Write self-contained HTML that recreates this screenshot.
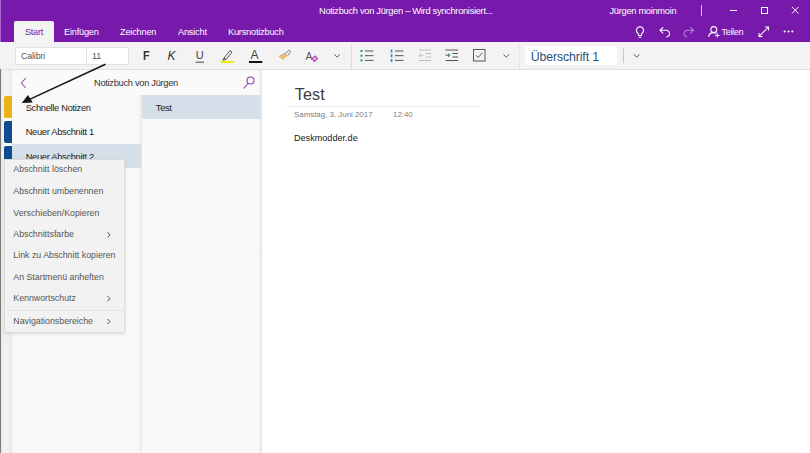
<!DOCTYPE html>
<html><head><meta charset="utf-8">
<style>
*{box-sizing:border-box;margin:0;padding:0}
html,body{width:810px;height:453px;overflow:hidden;background:#fff;font-family:"Liberation Sans","DejaVu Sans",sans-serif;}
#app{position:relative;width:810px;height:453px;overflow:hidden;background:#fff}
.abs{position:absolute}
#title{left:0;top:0;width:810px;height:42.4px;background:#7719aa}
.tt{position:absolute;color:#fff;font-size:9.3px;white-space:nowrap;line-height:12px;letter-spacing:-.3px}
#ribbon{left:0;top:42px;width:810px;height:28px;background:#f3f3f3;border-bottom:1px solid #e1e1e1}
.tab{position:absolute;top:26px;color:#fff;font-size:9.2px;line-height:12px;white-space:nowrap;letter-spacing:-.2px}
#tabstart{position:absolute;left:14px;top:21px;width:40px;height:22px;background:#f3f3f3;border-radius:2px 2px 0 0;color:#7719aa;font-size:9.2px;line-height:12px;text-align:center;padding-top:5px;letter-spacing:-.25px}
.box{position:absolute;background:#fff;border:1px solid #e3e3e3;font-size:8.9px;color:#555;line-height:17.5px;padding-left:5px;letter-spacing:-.15px}
.ri{position:absolute;top:42px;height:28px}
#navhead{left:12px;top:70px;width:250px;height:25px;background:#fafafa;}
#sections{left:12px;top:95px;width:131px;height:358px;background:#f8f8f8}
#pages{left:142px;top:95px;width:119px;height:358px;background:#f9f9f9}
.item{position:absolute;left:0;width:100%;height:24px;font-size:9.3px;color:#222;line-height:25.5px;padding-left:13.7px;white-space:nowrap;letter-spacing:-.3px}
.sel{background:#d4dfe9}
#menu{left:4px;top:158.5px;width:121px;height:174.5px;background:#f2f2f2;border:1px solid #dcdcdc;box-shadow:0 1px 3px rgba(0,0,0,.12)}
.mi{position:absolute;left:8.3px;font-size:8.8px;color:#555;line-height:12px;white-space:nowrap;letter-spacing:0}
.chev{position:absolute;left:100px;font-size:9px;color:#444}
</style></head><body>
<div id="app">
 <div id="title" class="abs"></div>
 <div class="tt" style="left:319px;top:4.7px">Notizbuch von Jürgen – Wird synchronisiert...</div>
 <div class="tt" style="left:609.5px;top:4.6px">Jürgen moinmoin</div>
 <div class="abs" style="left:701px;top:5px;width:1px;height:11px;background:#d9b8ea"></div>
 <svg class="abs" style="left:720px;top:0" width="90" height="21" viewBox="0 0 90 21">
  <path d="M10 10.5h7" stroke="#fff" stroke-width="1" fill="none"/>
  <rect x="41.5" y="7.5" width="6" height="6" stroke="#fff" stroke-width="1" fill="none"/>
  <path d="M72 7l6.5 6.5M78.500 7l-6.500 6.500" stroke="#fff" stroke-width="1" fill="none"/>
 </svg>
 <div id="tabstart">Start</div>
 <div class="tab" style="left:64px">Einfügen</div>
 <div class="tab" style="left:120px">Zeichnen</div>
 <div class="tab" style="left:178px">Ansicht</div>
 <div class="tab" style="left:228px">Kursnotizbuch</div>
 <!-- right title icons -->
 <svg class="abs" style="left:630px;top:21px" width="180" height="21" viewBox="0 0 180 21">
  <g stroke="#fff" fill="none" stroke-width="1.050">
   <path d="M10 5.700a3.600 3.600 0 0 1 1.800 6.700l-.3 2h-3l-.3 -2a3.600 3.600 0 0 1 1.800 -6.700z"/>
   <path d="M8.500 16.200h3"/>
   <path d="M33.200 6.200l-3.200 3.100 3.200 3.100M30.300 9.300h5.700a3.300 3.300 0 0 1 3.500 3.300c0 2 -1.400 3.300 -3.300 3.300"/>
   <path d="M60.300 6.200l3.200 3.100 -3.200 3.100M63.200 9.300h-5.700a3.300 3.300 0 0 0 -3.500 3.300c0 2 1.400 3.300 3.300 3.300" stroke="#b687d2"/>
   <circle cx="83.800" cy="8.600" r="3"/><path d="M78.700 16c0 -3 2.300 -4.400 5.100 -4.400 1.100 0 2 .2 2.700 .6M87.300 12.200v4.400M85.100 14.400h4.400"/>
   <path d="M129 15.500l9.500 -9.500M129 12v3.500h3.500M135 6h3.500v3.500"/>
  </g>
  <circle cx="154.700" cy="10.500" r="1.050" fill="#fff"/><circle cx="158.500" cy="10.500" r="1.050" fill="#fff"/><circle cx="162.300" cy="10.500" r="1.050" fill="#fff"/>
 </svg>
 <div class="tt" style="left:721.500px;top:25.500px;font-size:9px;letter-spacing:-.3px">Teilen</div>

 <div id="ribbon" class="abs"></div>
 <div class="box" style="left:15px;top:47px;width:72px;height:18px">Calibri</div>
 <div class="box" style="left:86px;top:47px;width:43px;height:18px">11</div>
 <svg class="abs" style="left:130px;top:42px" width="520" height="28" viewBox="0 0 520 28">
  <text x="13" y="18.300" font-family="Liberation Sans" font-weight="bold" font-size="12" textLength="6.600" lengthAdjust="spacingAndGlyphs" fill="#333">F</text>
  <text x="37.500" y="18.300" font-family="Liberation Sans" font-style="italic" font-size="12" fill="#333">K</text>
  <text x="65.700" y="17.300" font-family="Liberation Sans" font-size="11" fill="#444">U</text>
  <path d="M65.700 20.200h8.300" stroke="#444" stroke-width="1"/>
  <!-- highlighter -->
  <path d="M94 16l6 -7.500 2 1.500 -6 7.500z M94 16l-1.200 2.200 3.200 -.7" stroke="#444" stroke-width=".9" fill="none"/>
  <rect x="90.700" y="19" width="13.300" height="2" fill="#f5ec00"/>
  <!-- font colour -->
  <text x="120.600" y="17" font-family="Liberation Sans" font-size="12" fill="#444">A</text>
  <rect x="119" y="19" width="13.300" height="2" fill="#111"/>
  <!-- format painter -->
  <path d="M149 14.500l6 -3.500 2.500 3 -5 4z" fill="#f0c070"/>
  <path d="M149 14.500l6 -3.500 2.500 3" stroke="#999" stroke-width=".7" fill="none"/>
  <path d="M155.500 11.500l3.500 -3.500 1.500 1.500 -2.500 4" stroke="#777" stroke-width=".9" fill="none"/>
  <!-- clear formatting -->
  <text x="175.500" y="18" font-family="Liberation Sans" font-size="10.500" fill="#555">A</text>
  <path d="M182 17l3 -3 2.500 2.500 -3 3z" stroke="#b146c2" stroke-width="1.200" fill="#e9b8f0"/>
  <path d="M204.500 12.500l2.700 2.700 2.700 -2.700" stroke="#555" stroke-width="1" fill="none"/>
  <path d="M221.500 3v24" stroke="#dcdcdc" stroke-width="1"/>
  <!-- bullets -->
  <g fill="#17967c"><rect x="230.500" y="8" width="2" height="2"/><rect x="230.500" y="12.700" width="2" height="2"/><rect x="230.500" y="17.400" width="2" height="2"/></g>
  <path d="M235 9h8.500M235 13.700h8.500M235 18.400h8.500" stroke="#555" stroke-width="1"/>
  <g fill="#2b8fb0"><rect x="260.700" y="7.500" width="1.700" height="3"/><rect x="260.700" y="12.200" width="1.700" height="3"/><rect x="260.700" y="16.900" width="1.700" height="3"/></g>
  <path d="M265 9h8.500M265 13.700h8.500M265 18.400h8.500" stroke="#555" stroke-width="1"/>
  <!-- outdent (disabled) -->
  <path d="M289 8h12M295.500 11.500h5.500M295.500 15h5.500M289 18.500h12M293.500 13.200h-4M291 11.500l-2 1.700 2 1.700" stroke="#bdbdbd" stroke-width="1" fill="none"/>
  <!-- indent -->
  <path d="M315.500 8h12.500M322.500 11.500h5.500M322.500 15h5.500M315.500 18.500h12.500" stroke="#555" stroke-width="1" fill="none"/>
  <path d="M315.500 13.200h4M318 11.500l2 1.700 -2 1.700" stroke="#217a5b" stroke-width="1" fill="none"/>
  <rect x="343.500" y="7.500" width="11.500" height="11.500" stroke="#555" fill="none"/>
  <path d="M346 13.300l2.200 2.200 4.300 -4.700" stroke="#555" stroke-width="1" fill="none"/>
  <path d="M373.500 12.500l2.700 2.700 2.700 -2.700" stroke="#555" stroke-width="1" fill="none"/>
  <path d="M389.500 3v24" stroke="#e6e6e6" stroke-width="1"/>
  <rect x="395" y="4.300" width="92.500" height="18.400" fill="#fff"/>
  <text x="400.800" y="18.800" font-family="Liberation Sans" font-size="12.300" letter-spacing="-.12" fill="#27517c">Überschrift 1</text>
  <path d="M493.500 6v15" stroke="#c8c8c8" stroke-width="1"/>
  <path d="M504 12.500l2.700 2.700 2.700 -2.700" stroke="#555" stroke-width="1" fill="none"/>
 </svg>

 <!-- nav -->
 <div class="abs" style="left:0;top:70px;width:12px;height:383px;background:linear-gradient(90deg,#f0f0f0 0,#f0f0f0 9px,#e7e7e7 12px)"></div>
 <div id="navhead" class="abs"></div>
 <div class="abs" style="left:94px;top:76.600px;font-size:9.300px;color:#333;line-height:12px;white-space:nowrap;letter-spacing:-.3px">Notizbuch von Jürgen</div>
 <svg class="abs" style="left:12px;top:70px" width="250" height="25" viewBox="0 0 250 25">
  <path d="M13.700 8l-4.200 5 4.200 5" stroke="#9550bd" stroke-width="1.100" fill="none"/>
  <circle cx="238.500" cy="10.500" r="3.500" stroke="#8a3db5" stroke-width="1.100" fill="none"/>
  <path d="M236 13.500l-4.500 5" stroke="#8a3db5" stroke-width="1.100"/>
 </svg>
 <div id="sections" class="abs">
  <div class="item" style="top:0.500px">Schnelle Notizen</div>
  <div class="item" style="top:24.700px">Neuer Abschnitt 1</div>
  <div class="item sel" style="top:49px;height:23.500px;line-height:26px">Neuer Abschnitt 2</div>
 </div>
 <div class="abs" style="left:138px;top:95px;width:4.500px;height:358px;background:linear-gradient(90deg,rgba(228,228,228,0),rgba(228,228,228,.9))"></div>
 <div id="pages" class="abs">
  <div class="item sel" style="top:0;padding-left:13.800px;line-height:26px">Test</div>
 </div>
 <div class="abs" style="left:4px;top:96px;width:8px;height:21.500px;background:#e8b417;border-radius:2px 0 0 2px"></div>
 <div class="abs" style="left:4px;top:120.500px;width:8px;height:22px;background:#0c4c8f;border-radius:2px 0 0 2px"></div>
 <div class="abs" style="left:4px;top:145.500px;width:8px;height:22px;background:#0c4c8f;border-radius:2px 0 0 2px"></div>
 <div class="abs" style="left:4px;top:117.500px;width:8px;height:3px;background:#fafafa"></div>
 <div class="abs" style="left:4px;top:142.500px;width:8px;height:3px;background:#fafafa"></div>
 <div class="abs" style="left:258px;top:70px;width:4px;height:383px;background:linear-gradient(90deg,rgba(228,228,228,0),#e4e4e4)"></div>

 <!-- content -->
 <div class="abs" style="left:294.700px;top:82.500px;font-size:16.200px;color:#3c3c3c;line-height:22px;letter-spacing:.1px">Test</div>
 <div class="abs" style="left:287px;top:106px;width:193px;height:1px;background:#ebebeb"></div>
 <div class="abs" style="left:294px;top:110px;font-size:7.900px;color:#808080;line-height:10px;white-space:nowrap">Samstag, 3. Juni 2017</div>
 <div class="abs" style="left:393px;top:110px;font-size:7.900px;color:#808080;line-height:10px">12:40</div>
 <div class="abs" style="left:294px;top:132px;font-size:9.100px;color:#1a1a1a;line-height:12px;">Deskmodder.de</div>

 <!-- arrow -->
 <svg class="abs" style="left:0;top:40px" width="140" height="80" viewBox="0 0 140 80">
  <path d="M105.500 24.200L29 59.600" stroke="#151515" stroke-width="1.500"/>
  <path d="M21.700 62.900L28 55L32.700 62.600z" fill="#151515"/>
 </svg>

 <!-- context menu -->
 <div id="menu" class="abs">
  <div class="mi" style="top:3px">Abschnitt löschen</div>
  <div class="mi" style="top:25.1px">Abschnitt umbenennen</div>
  <div class="mi" style="top:47px">Verschieben/Kopieren</div>
  <div class="mi" style="top:68.3px">Abschnittsfarbe</div>
  <div class="mi" style="top:89.2px">Link zu Abschnitt kopieren</div>
  <div class="mi" style="top:111.3px">An Startmenü anheften</div>
  <div class="mi" style="top:132.3px">Kennwortschutz</div>
  <div class="abs" style="left:0;top:150px;width:119px;height:1px;background:#e4e4e4"></div>
  <div class="mi" style="top:155px">Navigationsbereiche</div>
  <svg class="abs" style="left:98px;top:0" width="12" height="175" viewBox="0 0 12 175">
   <g stroke="#444" stroke-width="1" fill="none"><path d="M4.500 72.300l2.500 2.500 -2.500 2.500"/><path d="M4.500 136.200l2.500 2.500 -2.500 2.500"/><path d="M4.500 159l2.500 2.500 -2.500 2.500"/></g>
  </svg>
 </div>
 <div class="abs" style="left:0;top:69px;width:2px;height:384px;background:linear-gradient(90deg,#7a7a7a,#7a7a7a 40%,#e6e6e6 75%,#f0f0f0)"></div>
 <div class="abs" style="left:0;top:0;width:1px;height:42px;background:#a565c8"></div>
</div>
</body></html>
